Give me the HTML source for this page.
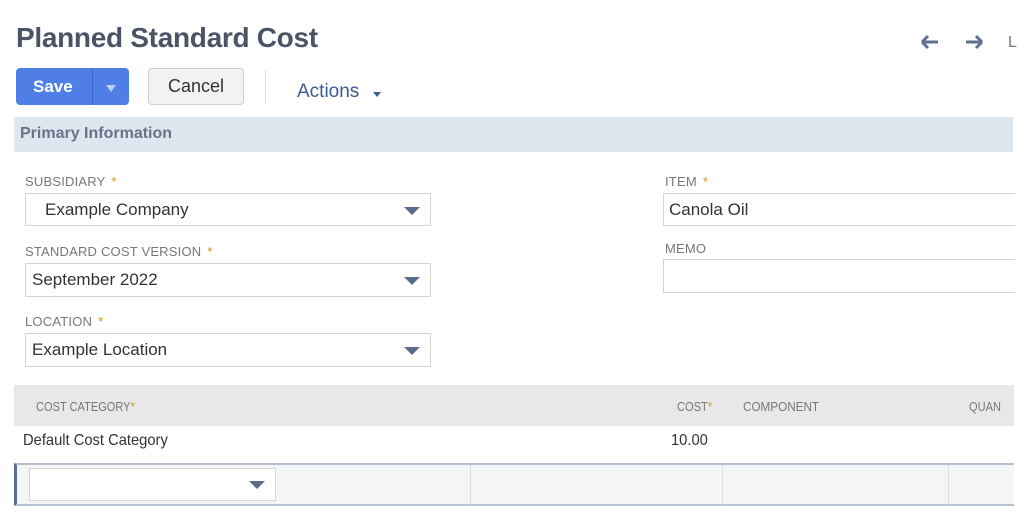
<!DOCTYPE html>
<html><head><style>
*{box-sizing:border-box;margin:0;padding:0}
body{width:1024px;height:513px;background:#fff;font-family:"Liberation Sans","DejaVu Sans",sans-serif;position:relative;overflow:hidden;color:#333}
.a{position:absolute}
.lbl{font-size:13px;color:#777;letter-spacing:0.2px}
.lbl b{color:#c8961e;font-weight:normal;margin-left:6px}
.fld{border:1px solid #d4d4d4;background:#fff;font-size:17px;color:#333;padding-left:6px;line-height:31px}
.tri{position:absolute;right:10px;top:13px;width:0;height:0;border-left:8px solid transparent;border-right:8px solid transparent;border-top:8px solid #5a6b8c}
</style></head><body>
<div class="a" style="left:16px;top:22px;font-size:28px;font-weight:bold;color:#4b5467;letter-spacing:-0.3px">Planned Standard Cost</div>
<svg class="a" style="left:920px;top:34px" width="70" height="16" viewBox="0 0 70 16"><path d="M2 8H18M2 8L8 2M2 8L8 14" stroke="#5f6f8f" stroke-width="3" fill="none"/><path d="M46 8H62M62 8L56 2M62 8L56 14" stroke="#5f6f8f" stroke-width="3" fill="none"/></svg>
<div class="a" style="left:1008px;top:34px;font-size:16px;color:#777">L</div>
<div class="a" style="left:16px;top:68px;width:113px;height:37px;background:#4f7fe6;border-radius:4px"></div>
<div class="a" style="left:92px;top:68px;width:1px;height:37px;background:#3a66c8"></div>
<div class="a" style="left:33px;top:77px;font-size:17px;color:#fff;font-weight:bold">Save</div>
<div class="a" style="left:106px;top:85px;border-left:5px solid transparent;border-right:5px solid transparent;border-top:7px solid #bcd0f7"></div>
<div class="a" style="left:148px;top:68px;width:96px;height:37px;background:#f2f2f2;border:1px solid #cfcfcf;border-radius:4px;font-size:18px;color:#333;text-align:center;line-height:35px">Cancel</div>
<div class="a" style="left:265px;top:70px;width:1px;height:33px;background:#ddd"></div>
<div class="a" style="left:297px;top:81px;font-size:19px;color:#3e5a93">Actions</div>
<div class="a" style="left:373px;top:92px;border-left:4px solid transparent;border-right:4px solid transparent;border-top:5px solid #3e5a93"></div>
<div class="a" style="left:14px;top:117px;width:999px;height:35px;background:#e0e6ef"></div>
<div class="a" style="left:20px;top:125px;font-size:16px;font-weight:bold;color:#667389">Primary Information</div>
<div class="a lbl" style="left:25px;top:174px">SUBSIDIARY<b>*</b></div>
<div class="a fld" style="left:25px;top:193px;width:406px;height:33px;padding-left:19px">Example Company<span class="tri"></span></div>
<div class="a lbl" style="left:25px;top:244px">STANDARD COST VERSION<b>*</b></div>
<div class="a fld" style="left:25px;top:263px;width:406px;height:34px">September 2022<span class="tri"></span></div>
<div class="a lbl" style="left:25px;top:314px">LOCATION<b>*</b></div>
<div class="a fld" style="left:25px;top:333px;width:406px;height:34px">Example Location<span class="tri"></span></div>
<div class="a lbl" style="left:665px;top:174px">ITEM<b>*</b></div>
<div class="a fld" style="left:663px;top:193px;width:352px;height:33px;padding-left:5px;border-right:none">Canola Oil</div>
<div class="a lbl" style="left:665px;top:241px">MEMO</div>
<div class="a fld" style="left:663px;top:259px;width:352px;height:34px;border-right:none"></div>
<div class="a" style="left:14px;top:385px;width:1000px;height:41px;background:#e8e8e8"></div>
<div class="a" style="left:36px;top:399px;font-size:13px;color:#777;transform:scaleX(.85);transform-origin:left">COST CATEGORY<span style="color:#c8961e">*</span></div>
<div class="a" style="left:677px;top:399px;font-size:13px;color:#777;transform:scaleX(.85);transform-origin:left">COST<span style="color:#c8961e">*</span></div>
<div class="a" style="left:743px;top:399px;font-size:13px;color:#777;transform:scaleX(.9);transform-origin:left">COMPONENT</div>
<div class="a" style="left:969px;top:399px;font-size:13px;color:#777;transform:scaleX(.85);transform-origin:left">QUAN</div>
<div class="a" style="left:23px;top:432px;font-size:16px;color:#333;transform:scaleX(.92);transform-origin:left">Default Cost Category</div>
<div class="a" style="left:671px;top:432px;font-size:16px;color:#333;transform:scaleX(.92);transform-origin:left">10.00</div>
<div class="a" style="left:14px;top:463px;width:1000px;height:43px;background:#f4f5f7;border-top:2px solid #b8c0d4;border-bottom:2px solid #b8c0d4;border-left:3px solid #5c6e94"></div>
<div class="a" style="left:470px;top:465px;width:1px;height:40px;background:#ddd"></div>
<div class="a" style="left:722px;top:465px;width:1px;height:40px;background:#ddd"></div>
<div class="a" style="left:948px;top:465px;width:1px;height:40px;background:#ddd"></div>
<div class="a fld" style="left:29px;top:468px;width:247px;height:33px"><span class="tri" style="top:12px"></span></div>
</body></html>
